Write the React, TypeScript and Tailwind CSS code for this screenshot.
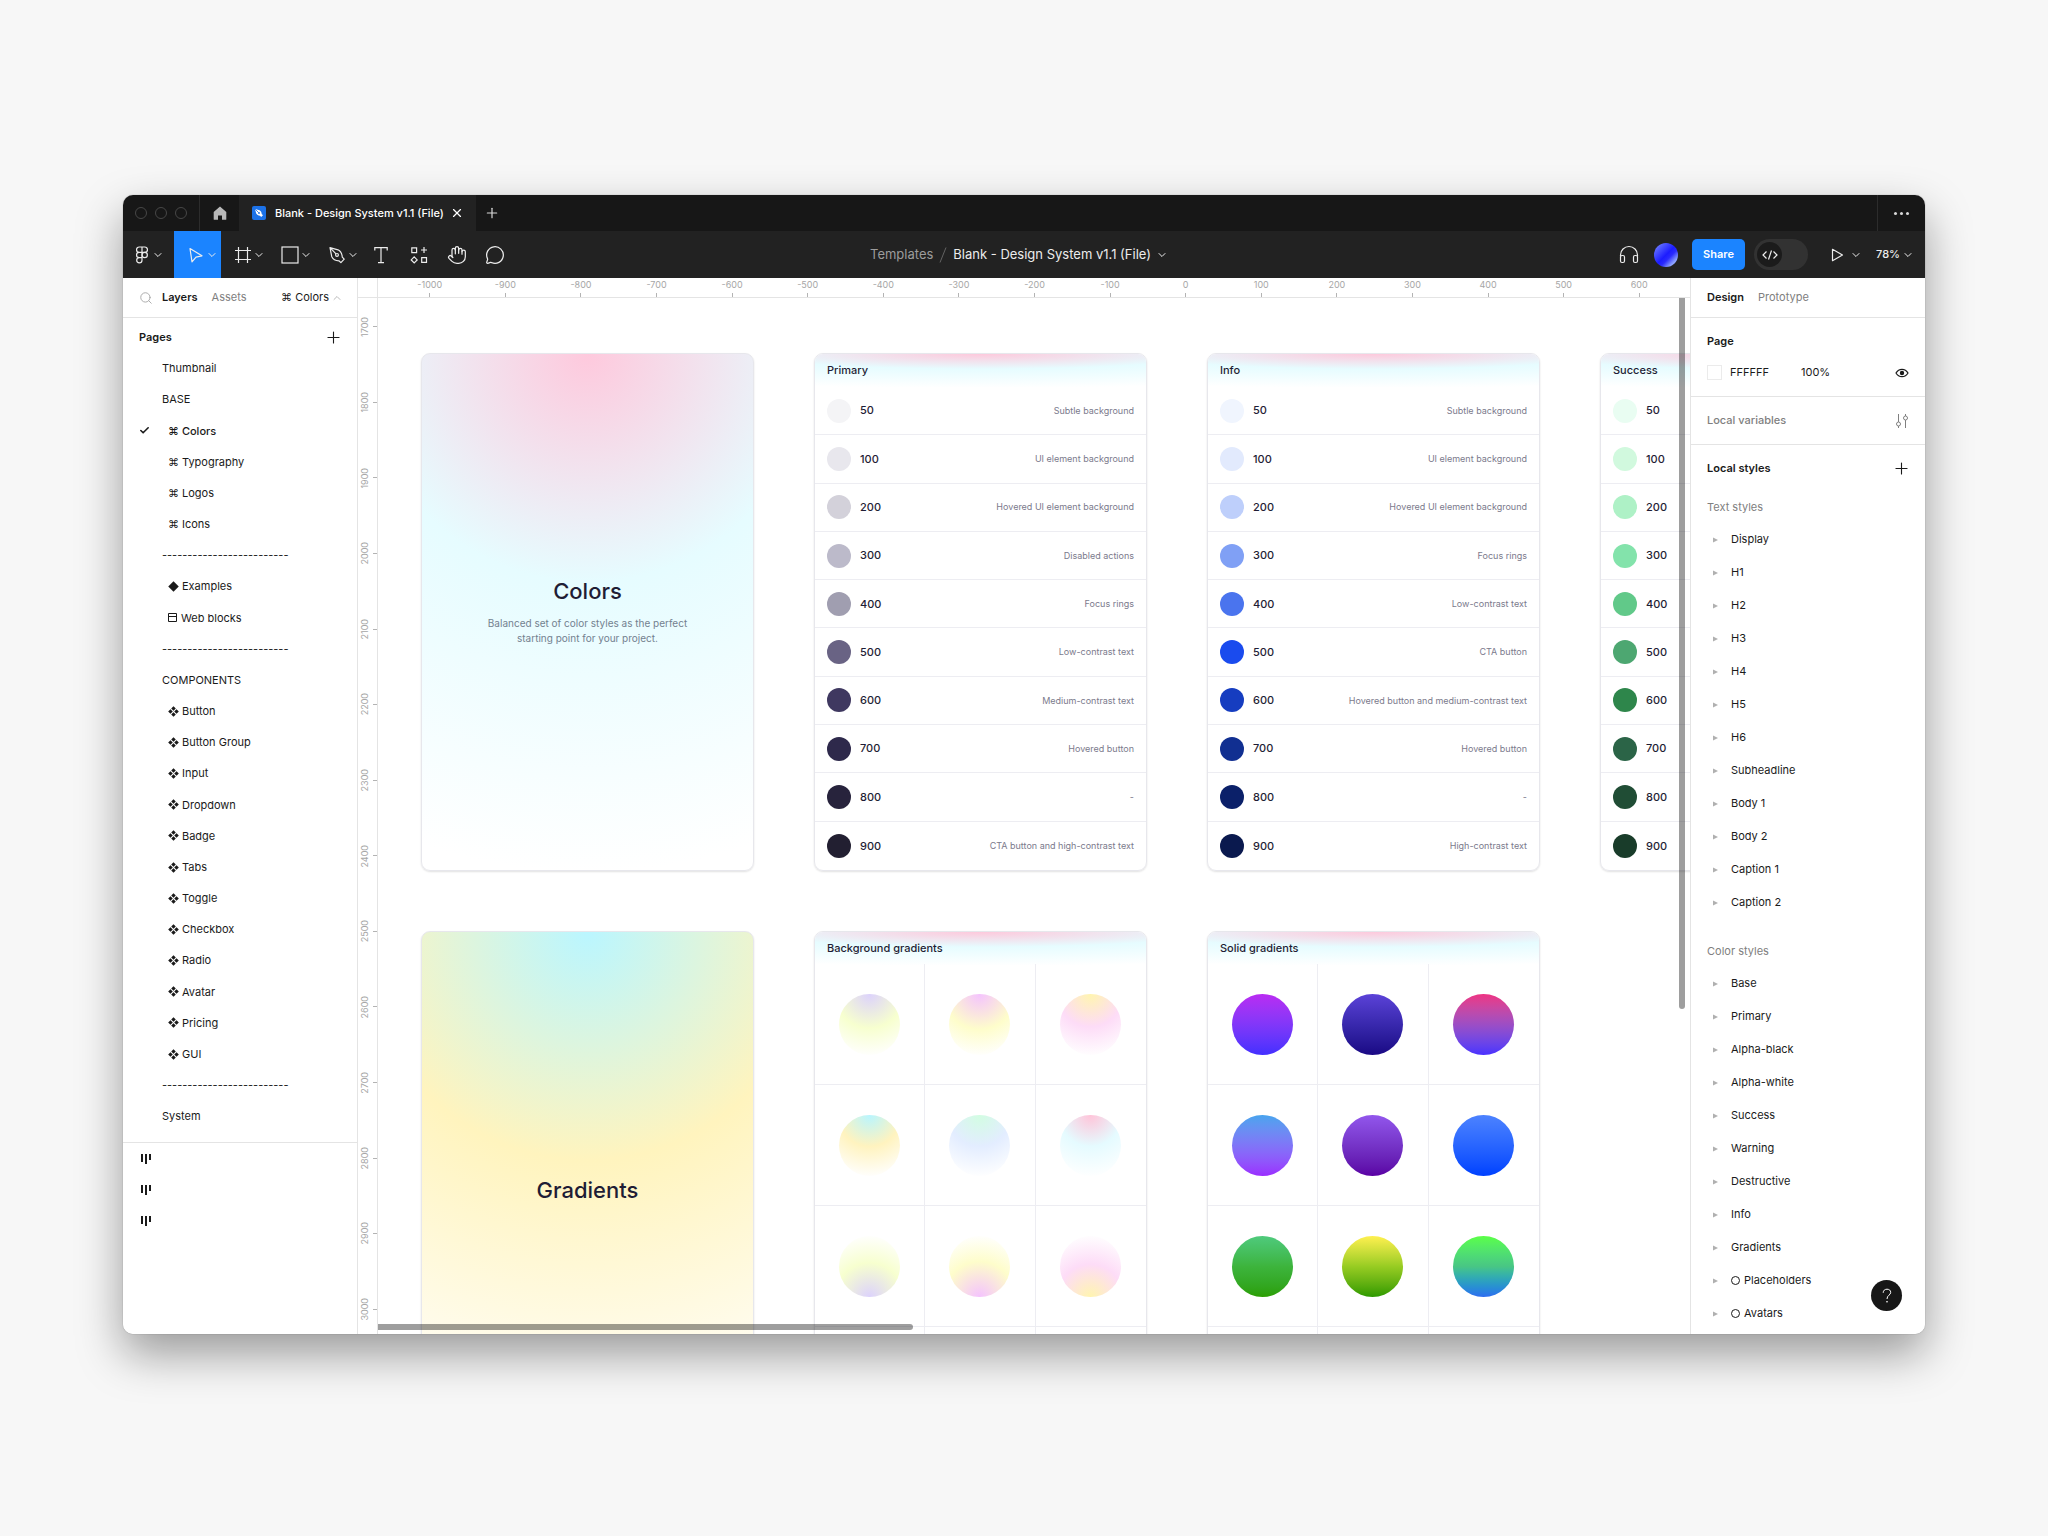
import type { ReactNode } from "react";
import { Check, ChevronDown, ChevronUp, Hand, MessageCircle, Plus, Search, X } from "lucide-react";

type PageItem = {
  label: string;
  icon?: "command" | "diamond" | "window" | "component";
  active?: boolean;
};

const divider = "-------------------------";

const pages: PageItem[] = [
  { label: "Thumbnail" },
  { label: "BASE" },
  { label: "Colors", icon: "command", active: true },
  { label: "Typography", icon: "command" },
  { label: "Logos", icon: "command" },
  { label: "Icons", icon: "command" },
  { label: divider },
  { label: "Examples", icon: "diamond" },
  { label: "Web blocks", icon: "window" },
  { label: divider },
  { label: "COMPONENTS" },
  { label: "Button", icon: "component" },
  { label: "Button Group", icon: "component" },
  { label: "Input", icon: "component" },
  { label: "Dropdown", icon: "component" },
  { label: "Badge", icon: "component" },
  { label: "Tabs", icon: "component" },
  { label: "Toggle", icon: "component" },
  { label: "Checkbox", icon: "component" },
  { label: "Radio", icon: "component" },
  { label: "Avatar", icon: "component" },
  { label: "Pricing", icon: "component" },
  { label: "GUI", icon: "component" },
  { label: divider },
  { label: "System" },
];

const textStyles = [
  "Display", "H1", "H2", "H3", "H4", "H5", "H6",
  "Subheadline", "Body 1", "Body 2", "Caption 1", "Caption 2",
];

const colorStyles = [
  "Base", "Primary", "Alpha-black", "Alpha-white", "Success", "Warning",
  "Destructive", "Info", "Gradients", "○Placeholders", "○Avatars",
];

const rulerX = Array.from({ length: 17 }, (_, i) => (i - 10) * 100);
const rulerY = Array.from({ length: 14 }, (_, i) => 1700 + i * 100);

type Swatch = { step: string; color: string; use?: string };

const primary: Swatch[] = [
  { step: "50", color: "bg-[#f4f4f6]", use: "Subtle background" },
  { step: "100", color: "bg-[#e8e7ed]", use: "UI element background" },
  { step: "200", color: "bg-[#d3d1da]", use: "Hovered UI element background" },
  { step: "300", color: "bg-[#bcbaca]", use: "Disabled actions" },
  { step: "400", color: "bg-[#a09eb0]", use: "Focus rings" },
  { step: "500", color: "bg-[#696384]", use: "Low-contrast text" },
  { step: "600", color: "bg-[#3f3860]", use: "Medium-contrast text" },
  { step: "700", color: "bg-[#2e294b]", use: "Hovered button" },
  { step: "800", color: "bg-[#27233c]", use: "-" },
  { step: "900", color: "bg-[#221f31]", use: "CTA button and high-contrast text" },
];

const info: Swatch[] = [
  { step: "50", color: "bg-[#f0f5fe]", use: "Subtle background" },
  { step: "100", color: "bg-[#e2eafd]", use: "UI element background" },
  { step: "200", color: "bg-[#becffb]", use: "Hovered UI element background" },
  { step: "300", color: "bg-[#80a0f5]", use: "Focus rings" },
  { step: "400", color: "bg-[#4a74ee]", use: "Low-contrast text" },
  { step: "500", color: "bg-[#1a4bee]", use: "CTA button" },
  { step: "600", color: "bg-[#163dc0]", use: "Hovered button and medium-contrast text" },
  { step: "700", color: "bg-[#112f91]", use: "Hovered button" },
  { step: "800", color: "bg-[#0b2069]", use: "-" },
  { step: "900", color: "bg-[#0a194e]", use: "High-contrast text" },
];

const success: Swatch[] = [
  { step: "50", color: "bg-[#e9fdf2]" },
  { step: "100", color: "bg-[#d1f9de]" },
  { step: "200", color: "bg-[#aef1c6]" },
  { step: "300", color: "bg-[#83e3ab]" },
  { step: "400", color: "bg-[#61c989]" },
  { step: "500", color: "bg-[#4da771]" },
  { step: "600", color: "bg-[#2e864b]" },
  { step: "700", color: "bg-[#2b6447]" },
  { step: "800", color: "bg-[#204d35]" },
  { step: "900", color: "bg-[#193c2a]" },
];

const backgroundGradients = [
  "bg-[radial-gradient(circle_at_50%_0,#dcd2fc,#f7ffcf_50%,#ffffff_92%)]",
  "bg-[radial-gradient(circle_at_50%_0,#f4c3fe,#fefdcb_52%,#ffffff_92%)]",
  "bg-[radial-gradient(circle_at_50%_0,#fff5b0,#fddcf7_48%,#ffffff_92%)]",
  "bg-[radial-gradient(circle_at_50%_0,#b8f5ff,#fff3bf_46%,#ffffff_92%)]",
  "bg-[radial-gradient(circle_at_50%_0,#d2fde2,#e3edff_46%,#ffffff_92%)]",
  "bg-[radial-gradient(circle_at_50%_0,#ffc4d9,#e5fbff_46%,#ffffff_92%)]",
  "bg-[radial-gradient(circle_at_50%_100%,#dcd2fc,#f7ffcf_50%,#ffffff_92%)]",
  "bg-[radial-gradient(circle_at_50%_100%,#f4c3fe,#fefdcb_52%,#ffffff_92%)]",
  "bg-[radial-gradient(circle_at_50%_100%,#fff5b0,#fddcf7_48%,#ffffff_92%)]",
  "bg-white",
  "bg-white",
  "bg-white",
];

const solidGradients = [
  "bg-linear-to-b from-[#b92bf2] to-[#432fff]",
  "bg-linear-to-b from-[#5b42d8] to-[#1a0884]",
  "bg-linear-to-b from-[#ee3283] to-[#4a30ff]",
  "bg-linear-to-b from-[#47a4ee] to-[#9a2bff]",
  "bg-linear-to-b from-[#9256ec] to-[#5a00a4]",
  "bg-linear-to-b from-[#4c82ff] to-[#0040ff]",
  "bg-linear-to-b from-[#4fca7c] via-[#3db43c] to-[#2b9f00]",
  "bg-linear-to-b from-[#fff04f] via-[#97cc22] to-[#2b9a00]",
  "bg-linear-to-b from-[#5bff45] via-[#48c684] to-[#2f6cf0]",
  "bg-white",
  "bg-white",
  "bg-white",
];

function Icon({ children }: { children: ReactNode }) {
  return (
    <svg viewBox="0 0 20 20" fill="none" stroke="currentColor" strokeWidth="1.2" className="size-5 shrink-0" aria-hidden="true">
      {children}
    </svg>
  );
}

function Caret() {
  return <ChevronDown className="size-3 shrink-0" strokeWidth={2} aria-hidden="true" />;
}

function Tool({ label, menu, active, children }: { label: string; menu?: boolean; active?: boolean; children: ReactNode }) {
  const size = menu ? "w-[47px] pl-2" : "w-[38px]";
  return (
    <button type="button" aria-label={label} className={`flex h-full items-center justify-center ${size} ${active ? "bg-[#1b84ff]" : ""}`}>
      {children}
      {menu && <Caret />}
    </button>
  );
}

function TabBar() {
  return (
    <div className="flex h-9 shrink-0 items-stretch bg-[#171717] text-[#d9d9d9]">
      <div className="flex w-[77px] items-center justify-center gap-2 border-r border-[#2c2c2c]">
        <span className="size-3 rounded-full border border-[#474747]" />
        <span className="size-3 rounded-full border border-[#474747]" />
        <span className="size-3 rounded-full border border-[#474747]" />
      </div>
      <button type="button" aria-label="Home" className="flex w-[39px] items-center justify-center">
        <svg viewBox="0 0 14 14" className="size-[14px]" fill="#b8b8b8" aria-hidden="true">
          <path d="M7 .6 13.3 6v7.2a.5.5 0 0 1-.5.5H9V9.600H5v4.100H1.200a.5.5 0 0 1-.5-.5V6z" />
        </svg>
      </button>
      <div className="flex w-[237px] items-center bg-[#222222] pl-[13px] text-white">
        <svg viewBox="0 0 14 14" className="size-[14px]" fill="none" aria-hidden="true">
          <rect width="14" height="14" rx="2" fill="#1c72e8" />
          <path d="M3 3l4.600 1.200c1.300.7 2 2 2.100 3.800l1.300 1.200-1.800 1.800L8 9.700C6.200 9.600 4.900 8.900 4.200 7.600z" fill="#fff" />
          <path d="M3 3l3.600 3.600" stroke="#1c72e8" strokeWidth=".8" />
          <circle cx="7" cy="7" r=".9" fill="#1c72e8" />
        </svg>
        <span className="ml-[9px] text-[11px] font-medium whitespace-nowrap">Blank - Design System v1.1 (File)</span>
        <button type="button" aria-label="Close tab" className="mr-3 ml-auto">
          <X className="size-[14px]" strokeWidth={2} />
        </button>
      </div>
      <button type="button" aria-label="New tab" className="flex w-8 items-center justify-center">
        <Plus className="size-4" strokeWidth={1.8} />
      </button>
      <button type="button" aria-label="More" className="ml-auto flex w-[48px] items-center justify-center gap-[3px] border-l border-[#2c2c2c]">
        <span className="size-[3px] rounded-full bg-[#d9d9d9]" />
        <span className="size-[3px] rounded-full bg-[#d9d9d9]" />
        <span className="size-[3px] rounded-full bg-[#d9d9d9]" />
      </button>
    </div>
  );
}

function Toolbar() {
  return (
    <header className="grid h-[47px] shrink-0 grid-cols-[1fr_auto_1fr] items-center bg-[#222222] text-[#ececec]">
      <div className="flex h-full items-center">
        <button type="button" aria-label="Main menu" className="flex h-full w-[51px] items-center pl-[9px]">
          <Icon>
            <path d="M10 2H7.200a2.650 2.650 0 0 0 0 5.300H10zM10 2h2.800a2.650 2.650 0 0 1 0 5.300H10M10 7.300H7.200a2.650 2.650 0 0 0 0 5.300H10zM7.200 12.600A2.650 2.650 0 1 0 10 15.300V12.600z" />
            <circle cx="12.700" cy="9.950" r="2.650" />
          </Icon>
          <Caret />
        </button>
        <Tool label="Move" menu active>
          <Icon><path d="M4 3.600 16 10.800l-6 1.400-4 4.600z" strokeLinejoin="round" /></Icon>
        </Tool>
        <Tool label="Frame" menu>
          <Icon><path d="M5.500 2v16M14.500 2v16M2 5.500h16M2 14.500h16" /></Icon>
        </Tool>
        <Tool label="Shape" menu>
          <Icon><rect x="2" y="2" width="16" height="16" /></Icon>
        </Tool>
        <Tool label="Pen" menu>
          <Icon>
            <path d="M3 2.700 11 4.800c2.500 1.200 4 3.700 4.300 7.400l1.900 2-3.300 3.400-2-1.800c-3.600-.2-6-1.700-7.200-4.400zM3 2.700l6 6.200" strokeLinejoin="round" />
            <circle cx="10" cy="9.900" r="1.400" />
          </Icon>
        </Tool>
        <Tool label="Text">
          <Icon><path d="M3.800 5.500V2.600h12.400v2.900M10 2.600v15M7 17.600h6" /></Icon>
        </Tool>
        <Tool label="Resources">
          <Icon>
            <path d="M2.800 2.800h4.800v4.800H2.800zM12.700 12.600h4.800v4.800h-4.800zM15 2v6M12 5h6M5.200 11.800l3 3.100-3 3.100-3-3.100z" />
          </Icon>
        </Tool>
        <Tool label="Hand tool">
          <Hand className="size-5" strokeWidth={1.5} />
        </Tool>
        <Tool label="Comment">
          <MessageCircle className="size-5" strokeWidth={1.5} />
        </Tool>
      </div>

      <div className="flex items-center pr-[10px] text-[13px]">
        <a href="#templates" className="text-[#9c9c9c]">Templates</a>
        <svg viewBox="0 0 8 16" className="mx-[6px] h-4 w-2" stroke="#636363" aria-hidden="true"><path d="M7 .5 1 15.500" /></svg>
        <button type="button" className="flex items-center gap-[5px] whitespace-nowrap">
          Blank - Design System v1.1 (File)
          <Caret />
        </button>
      </div>

      <div className="flex h-full items-center justify-end pr-[11px]">
        <button type="button" aria-label="Audio" className="mr-[15px]">
          <Icon>
            <path d="M1.500 11.500V10a8.500 8.500 0 0 1 17 0v1.500" />
            <rect x="1.500" y="10.500" width="4" height="7" rx="1.500" />
            <rect x="14.500" y="10.500" width="4" height="7" rx="1.500" />
          </Icon>
        </button>
        <span className="mr-[14px] size-6 rounded-full bg-[linear-gradient(135deg,#8d9bff_0%,#5560ff_20%,#1c1cff_50%,#2a2aff_62%,#8fa5ff_82%,#5a70ff_100%)]" />
        <button type="button" className="h-[31px] w-[53px] rounded-[5px] bg-[#1b84ff] text-[11px] font-semibold text-white">Share</button>
        <button type="button" role="switch" aria-checked="false" aria-label="Dev mode" className="ml-[9px] flex h-[31px] w-[54px] items-center rounded-full bg-[#323232] pl-[3px]">
          <span className="flex size-[25px] items-center justify-center rounded-full bg-[#1b1b1b]">
            <svg viewBox="0 0 16 12" className="h-3 w-4" fill="none" stroke="currentColor" strokeWidth="1.2" aria-hidden="true">
              <path d="M4.500 2.500 1 6l3.500 3.500M11.500 2.500 15 6l-3.500 3.500M9.500 1.500l-3 9" />
            </svg>
          </span>
        </button>
        <button type="button" aria-label="Present" className="ml-[20px] flex items-center gap-[2px]">
          <Icon><path d="M4.500 4.300v11.400L14.500 10z" strokeLinejoin="round" /></Icon>
          <Caret />
        </button>
        <button type="button" className="ml-[14px] flex items-center gap-[2px] text-[11px] font-medium">
          78%
          <Caret />
        </button>
      </div>
    </header>
  );
}

function PageIcon({ icon }: { icon: PageItem["icon"] }) {
  if (icon === "command") return <span className="mr-[3px]">⌘</span>;
  if (icon === "window") {
    return (
      <svg viewBox="0 0 9 9" className="mr-1 size-[9px]" fill="none" stroke="currentColor" aria-hidden="true">
        <path d="M.5.5h8v8h-8zM.5 3.500h8" />
      </svg>
    );
  }
  return (
    <svg viewBox="0 0 12 12" className="mr-[3px] size-[11px]" fill="currentColor" aria-hidden="true">
      {icon === "diamond" ? (
        <path d="M6 .3 11.700 6 6 11.700.3 6z" />
      ) : (
        <path d="M6 .2 8.500 2.700 6 5.200 3.500 2.700zM2.700 3.500 5.200 6 2.700 8.500.2 6zM9.300 3.500 11.800 6 9.300 8.500 6.800 6zM6 6.800l2.500 2.500L6 11.800 3.500 9.300z" />
      )}
    </svg>
  );
}

function LeftPanel() {
  return (
    <aside className="flex w-[235px] shrink-0 flex-col border-r border-[#e4e4e4] bg-white">
      <div className="flex h-10 shrink-0 items-center border-b border-[#e4e4e4] pr-[14px] pl-4">
        <Search className="size-[14px] text-[#a8a8a8]" strokeWidth={1.6} />
        <button type="button" className="ml-[9px] font-semibold">Layers</button>
        <button type="button" className="ml-[14px] text-[#808080]">Assets</button>
        <button type="button" className="ml-auto flex items-center gap-[2px]">
          ⌘ Colors
          <ChevronUp className="size-3 text-[#a8a8a8]" strokeWidth={1.6} />
        </button>
      </div>
      <nav className="shrink-0 border-b border-[#e4e4e4] pb-[10px]">
        <div className="flex h-[35px] items-center justify-between pt-[3px] pr-[14px] pl-4">
          <h2 className="font-semibold">Pages</h2>
          <button type="button" aria-label="Add page"><Plus className="size-[19px]" strokeWidth={1.4} /></button>
        </div>
        <ul className="grid h-[779px] auto-rows-fr">
          {pages.map((page, i) => (
            <li key={i} className="flex items-center pl-4">
              <span className="w-[23px]">{page.active && <Check className="size-[11px]" strokeWidth={3.5} />}</span>
              <button type="button" className={`flex items-center ${page.icon ? "pl-[6px]" : ""} ${page.active ? "font-medium" : ""}`}>
                {page.icon && <PageIcon icon={page.icon} />}
                {page.label}
              </button>
            </li>
          ))}
        </ul>
      </nav>
      <ul>
        {[0, 1, 2].map((row) => (
          <li key={row} className="flex h-[31px] items-center pl-[18px]">
            <svg viewBox="0 0 10 10" className="size-[10px]" fill="currentColor" aria-hidden="true">
              <path d="M0 0h2v8H0zM4 0h2v10H4zM8 0h2v6H8z" />
            </svg>
          </li>
        ))}
      </ul>
    </aside>
  );
}

function StyleList({ title, items }: { title: string; items: string[] }) {
  return (
    <section>
      <h3 className="flex h-8 items-center text-[#808080]">{title}</h3>
      <ul>
        {items.map((item) => (
          <li key={item} className="flex h-[33px] items-center">
            <button type="button" className="flex items-center">
              <svg viewBox="0 0 6 6" className="mr-[13px] ml-[6px] h-[6px] w-[5px]" fill="#b0b0b0" aria-hidden="true"><path d="M0 0 6 3 0 6z" /></svg>
              {item.startsWith("○") && <span className="mr-[4px] size-[9px] rounded-full border border-current" />}
              {item.replace("○", "")}
            </button>
          </li>
        ))}
      </ul>
    </section>
  );
}

function RightPanel() {
  return (
    <aside className="relative flex w-[235px] shrink-0 flex-col overflow-hidden border-l border-[#e4e4e4] bg-white">
      <div className="flex h-10 shrink-0 items-center gap-[14px] border-b border-[#e4e4e4] px-4">
        <button type="button" className="font-semibold">Design</button>
        <button type="button" className="text-[#808080]">Prototype</button>
      </div>
      <section className="shrink-0 border-b border-[#e4e4e4] px-4 pt-[8px] pb-[8px]">
        <h2 className="flex h-[31px] items-center font-semibold">Page</h2>
        <div className="flex h-[31px] items-center">
          <span className="size-[15px] border border-[#ebebeb]" />
          <span className="ml-2 w-[71px]">FFFFFF</span>
          <span>100%</span>
          <button type="button" aria-label="Toggle visibility" className="ml-auto">
            <svg viewBox="0 0 14 10" className="h-[10px] w-[14px]" fill="none" stroke="currentColor" strokeWidth="1.2" aria-hidden="true">
              <path d="M1 5c1.400-2.400 3.500-3.700 6-3.700S11.600 2.600 13 5c-1.400 2.400-3.500 3.700-6 3.700S2.400 7.400 1 5z" />
              <circle cx="7" cy="5" r="2.200" fill="currentColor" stroke="none" />
            </svg>
          </button>
        </div>
      </section>
      <div className="flex h-12 shrink-0 items-center justify-between border-b border-[#e4e4e4] px-4 text-[#808080]">
        <h2 className="font-medium">Local variables</h2>
        <button type="button" aria-label="Open variables">
          <svg viewBox="0 0 14 14" className="size-[14px]" fill="none" stroke="currentColor" aria-hidden="true">
            <path d="M3.500 0v8M3.500 12v2M10.500 14V6M10.500 2V0" />
            <circle cx="3.500" cy="10" r="2" />
            <circle cx="10.500" cy="4" r="2" />
          </svg>
        </button>
      </div>
      <div className="px-4">
        <div className="-mr-[2px] flex h-[46px] items-center justify-between">
          <h2 className="font-semibold">Local styles</h2>
          <button type="button" aria-label="Add style"><Plus className="size-[19px]" strokeWidth={1.4} /></button>
        </div>
        <div className="flex flex-col gap-4">
          <StyleList title="Text styles" items={textStyles} />
          <StyleList title="Color styles" items={colorStyles} />
        </div>
      </div>
      <button type="button" aria-label="Help" className="absolute right-[23px] bottom-[23px] flex size-[31px] items-center justify-center rounded-full bg-[#171717] text-white">
        <svg viewBox="0 0 10 16" className="h-4 w-[10px]" fill="none" stroke="currentColor" aria-hidden="true">
          <path d="M1.200 4.800C1.200 2.600 2.700 1.200 5 1.200s3.700 1.300 3.700 3.200C8.700 7.300 5 7 5 11" />
          <circle cx="5" cy="13.800" r=".4" fill="currentColor" />
        </svg>
      </button>
    </aside>
  );
}

const cardClass =
  "flex h-[518px] w-[333px] shrink-0 flex-col overflow-hidden rounded-[9px] border border-[#e7e7ec] shadow-[0_1px_2px_rgba(0,0,0,0.12)]";

function CardHeader({ title }: { title: string }) {
  return (
    <h3 className="flex h-[33px] shrink-0 items-center bg-[radial-gradient(518px_34px_at_50%_0,#fdc9dc,#e6fcff_44%,#ffffff)] pb-px pl-3 font-medium">
      {title}
    </h3>
  );
}

function SwatchCard({ title, swatches }: { title: string; swatches: Swatch[] }) {
  return (
    <article className={cardClass}>
      <CardHeader title={title} />
      <ul className="grid flex-1 auto-rows-fr divide-y divide-[#ededf2]">
        {swatches.map(({ step, color, use }) => (
          <li key={step} className="flex items-center px-3">
            <span className={`size-6 rounded-full ${color}`} />
            <span className="ml-[9px] font-medium">{step}</span>
            {use && <span className="ml-auto text-[9px] text-[#7b7a8c]">{use}</span>}
          </li>
        ))}
      </ul>
    </article>
  );
}

function GradientCard({ title, gradients }: { title: string; gradients: string[] }) {
  return (
    <article className={cardClass}>
      <CardHeader title={title} />
      <ul className="-mt-px grid auto-rows-[121px] grid-cols-3">
        {gradients.map((gradient, i) => (
          <li key={i} className="flex items-center justify-center border-r border-b border-[#ededf2] nth-[3n]:border-r-0">
            <span className={`size-[61px] rounded-full ${gradient}`} />
          </li>
        ))}
      </ul>
    </article>
  );
}

function Canvas() {
  return (
    <main className="flex min-w-0 flex-1 flex-col bg-white">
      <div className="flex h-5 shrink-0 border-b border-[#e4e4e4] text-[9px] text-[#a6a6a6]">
        <div className="w-5 shrink-0 border-r border-[#e4e4e4]" />
        <div className="min-w-0 flex-1 overflow-hidden pl-[14px]">
          <ol className="grid h-full w-[1285px] grid-cols-17">
            {rulerX.map((n) => (
              <li key={n} className="flex flex-col items-center justify-between">
                <span className="leading-[14px]">{n}</span>
                <span className="h-[4px] w-px bg-[#b3b3b3]" />
              </li>
            ))}
          </ol>
        </div>
      </div>
      <div className="flex min-h-0 flex-1">
        <div className="w-5 shrink-0 overflow-hidden border-r border-[#e4e4e4] text-[9px] text-[#a6a6a6]">
          <ol className="-mt-[9px] grid h-[1058px] auto-rows-fr">
            {rulerY.map((n) => (
              <li key={n} className="flex items-center justify-between">
                <span className="rotate-180 leading-[14px] [writing-mode:vertical-rl]">{n}</span>
                <span className="h-px w-[4px] bg-[#b3b3b3]" />
              </li>
            ))}
          </ol>
        </div>
        <div className="relative min-w-0 flex-1 overflow-hidden text-[#1f1d35]">
          <div className="flex flex-col gap-[60px] pt-[55px] pl-[43px]">
            <div className="flex gap-[60px]">
              <article className={`${cardClass} items-center justify-center bg-[radial-gradient(518px_at_50%_0,#fec9dd,#e6fcff_44%,#ffffff)] pb-[3px] text-center`}>
                <h2 className="text-[22px] leading-8 font-medium">Colors</h2>
                <p className="mt-[9px] w-[220px] text-[10px] leading-[15px] text-[#73818f]">
                  Balanced set of color styles as the perfect starting point for your project.
                </p>
              </article>
              <SwatchCard title="Primary" swatches={primary} />
              <SwatchCard title="Info" swatches={info} />
              <SwatchCard title="Success" swatches={success} />
            </div>
            <div className="flex gap-[60px]">
              <article className={`${cardClass} items-center justify-center bg-[radial-gradient(518px_at_50%_0,#baf6ff,#fff4be_44%,#ffffff)] text-center`}>
                <h2 className="text-[22px] leading-8 font-medium">Gradients</h2>
              </article>
              <GradientCard title="Background gradients" gradients={backgroundGradients} />
              <GradientCard title="Solid gradients" gradients={solidGradients} />
            </div>
          </div>
          <div className="absolute top-0 right-[5px] h-[711px] w-[6px] rounded-b-full bg-black/38" />
          <div className="absolute bottom-[4px] left-0 h-[6px] w-[535px] rounded-r-full bg-black/38" />
        </div>
      </div>
    </main>
  );
}

export default function App() {
  return (
    <div className="flex h-screen flex-col bg-[#f7f7f7] px-[123px] pt-[195px] pb-[202px] font-['Inter',sans-serif] text-[11px] text-[#1a1a1a]">
      <div className="flex min-h-0 flex-1 flex-col overflow-hidden rounded-[10px] shadow-[0_0_1px_rgba(0,0,0,0.5),0_20px_46px_rgba(0,0,0,0.38)]">
        <TabBar />
        <Toolbar />
        <div className="flex min-h-0 flex-1">
          <LeftPanel />
          <Canvas />
          <RightPanel />
        </div>
      </div>
    </div>
  );
}
